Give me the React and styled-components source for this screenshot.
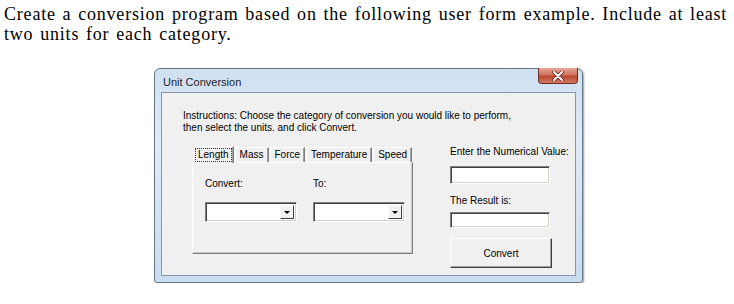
import styled, { createGlobalStyle } from "styled-components";

const GlobalStyle = createGlobalStyle`
  html, body {
    margin: 0;
    background: #ffffff;
  }
  body {
    padding: 4px 4px 0;
    font-family: "Liberation Serif", "Times New Roman", serif;
  }
`;

const Prompt = styled.p`
  margin: 0;
  font-size: 18px;
  line-height: 20px;
  letter-spacing: 0.8px;
  word-spacing: 1.5px;
  color: #000;
  white-space: nowrap;
`;

const Window = styled.div`
  width: 429px;
  height: 215px;
  box-sizing: border-box;
  margin: 24px 0 0 150px;
  border: 1px solid #67778a;
  border-radius: 6px 6px 3px 3px;
  background: linear-gradient(180deg, #cfe0f1 0%, #dfebf7 35%, #c9dcf0 100%);
  box-shadow: 1px 1px 2px rgba(0, 0, 0, 0.4);
  padding: 0 6px 6px 6px;
  font-family: "Liberation Sans", Arial, sans-serif;
`;

const TitleBar = styled.div`
  height: 23px;
  display: flex;
  align-items: flex-start;
  justify-content: space-between;
`;

const Title = styled.span`
  margin: 7px 0 0 2px;
  font-size: 11px;
  color: #1e1e1e;
`;

const CloseButton = styled.div`
  width: 38px;
  height: 15px;
  margin-top: -1px;
  margin-right: -2px;
  border: 1px solid #6b2c23;
  border-top: none;
  border-radius: 0 0 4px 4px;
  background: linear-gradient(180deg, #e6a798 0%, #d27260 45%, #bb452f 55%, #d37c65 100%);
  display: flex;
  align-items: center;
  justify-content: center;
`;

const Client = styled.div`
  border: 1px solid #8497ad;
  background: #f0f0f0;
  height: 184px;
  padding: 17px 0 0 21px;
  box-sizing: border-box;
  font-size: 10px;
  color: #000;
`;

const Instructions = styled.div`
  line-height: 12px;
`;

const Body = styled.div`
  display: grid;
  grid-template-columns: 221px 1fr;
  column-gap: 37px;
  margin-top: 12px;
  padding-left: 9px;
`;

const TabArea = styled.div`
  display: flex;
  flex-direction: column;
`;

const TabStrip = styled.div`
  display: flex;
  align-items: flex-end;
  height: 16px;
  padding-left: 1px;
`;

const Tab = styled.div`
  height: ${(p) => (p.$active ? "16px" : "14px")};
  padding: 0 2px;
  display: flex;
  align-items: center;
  border-left: 1px solid #ffffff;
  border-top: 1px solid #ffffff;
  border-right: 1px solid #808080;
  box-shadow: inset -1px 0 0 #a0a0a0;
  margin-right: 1px;
  position: relative;
  z-index: ${(p) => (p.$active ? 1 : 0)};
  margin-bottom: ${(p) => (p.$active ? "-1px" : "0")};
  background: #f0f0f0;
`;

const TabLabel = styled.span`
  padding: 0 2px;
  outline: ${(p) => (p.$focus ? "1px dotted #333" : "none")};
  line-height: 12px;
`;

const TabPanel = styled.div`
  height: 92px;
  box-sizing: border-box;
  border-left: 1px solid #ffffff;
  border-top: 1px solid #ffffff;
  border-right: 1px solid #808080;
  border-bottom: 1px solid #808080;
  box-shadow: inset -1px -1px 0 #c8c8c8;
  padding: 14px 0 0 12px;
  display: grid;
  grid-template-columns: 92px 92px;
  column-gap: 16px;
  grid-template-rows: 14px 20px;
  row-gap: 11px;
`;

const FieldLabel = styled.div`
  line-height: 14px;
`;

const Combo = styled.div`
  height: 20px;
  box-sizing: border-box;
  border-top: 1px solid #808080;
  border-left: 1px solid #808080;
  border-right: 1px solid #ffffff;
  border-bottom: 1px solid #ffffff;
  box-shadow: inset 1px 1px 0 #404040, inset -1px -1px 0 #d4d0c8;
  background: #ffffff;
  display: flex;
  justify-content: flex-end;
  padding: 2px;
`;

const DropButton = styled.div`
  width: 14px;
  background: #f0f0f0;
  border-top: 1px solid #ffffff;
  border-left: 1px solid #ffffff;
  border-right: 1px solid #404040;
  border-bottom: 1px solid #404040;
  box-sizing: border-box;
  display: flex;
  align-items: center;
  justify-content: center;
  &::after {
    content: "";
    border-left: 3px solid transparent;
    border-right: 3px solid transparent;
    border-top: 3px solid #000;
  }
`;

const SideColumn = styled.div`
  display: flex;
  flex-direction: column;
  white-space: nowrap;
`;

const SideLabel = styled.div`
  line-height: 12px;
  margin-bottom: ${(p) => p.$gap || "6px"};
`;

const TextBox = styled.div`
  width: 100px;
  height: ${(p) => p.$h || "18px"};
  box-sizing: border-box;
  border-top: 1px solid #808080;
  border-left: 1px solid #808080;
  border-right: 1px solid #ffffff;
  border-bottom: 1px solid #ffffff;
  box-shadow: inset 1px 1px 0 #404040, inset -1px -1px 0 #d4d0c8;
  background: #ffffff;
  margin-bottom: ${(p) => p.$mb || "10px"};
`;

const Button = styled.div`
  width: 102px;
  height: 30px;
  box-sizing: border-box;
  border-top: 1px solid #ffffff;
  border-left: 1px solid #ffffff;
  border-right: 1px solid #404040;
  border-bottom: 1px solid #404040;
  box-shadow: inset -1px -1px 0 #a0a0a0;
  background: #f0f0f0;
  display: flex;
  align-items: center;
  justify-content: center;
`;

const tabs = ["Length", "Mass", "Force", "Temperature", "Speed"];

export default function App() {
  return (
    <>
      <GlobalStyle />
      <Prompt>
        Create a conversion program based on the following user form example. Include at least
        <br />
        two units for each category.
      </Prompt>
      <Window>
        <TitleBar>
          <Title>Unit Conversion</Title>
          <CloseButton>
            <svg width="12" height="10" viewBox="0 0 12 10">
              <path
                d="M2 1 L10 9 M10 1 L2 9"
                stroke="#4a1a12"
                strokeWidth="3.4"
                strokeLinecap="round"
              />
              <path
                d="M2 1 L10 9 M10 1 L2 9"
                stroke="#ffffff"
                strokeWidth="2"
                strokeLinecap="round"
              />
            </svg>
          </CloseButton>
        </TitleBar>
        <Client>
          <Instructions>
            Instructions: Choose the category of conversion you would like to perform,
            <br />
            then select the units. and click Convert.
          </Instructions>
          <Body>
            <TabArea>
              <TabStrip>
                {tabs.map((t, i) => (
                  <Tab key={t} $active={i === 0}>
                    <TabLabel $focus={i === 0}>{t}</TabLabel>
                  </Tab>
                ))}
              </TabStrip>
              <TabPanel>
                <FieldLabel>Convert:</FieldLabel>
                <FieldLabel>To:</FieldLabel>
                <Combo>
                  <DropButton />
                </Combo>
                <Combo>
                  <DropButton />
                </Combo>
              </TabPanel>
            </TabArea>
            <SideColumn>
              <SideLabel $gap="8px">Enter the Numerical Value:</SideLabel>
              <TextBox $mb="11px" />
              <SideLabel $gap="5px">The Result is:</SideLabel>
              <TextBox $h="16px" $mb="10px" />
              <Button>Convert</Button>
            </SideColumn>
          </Body>
        </Client>
      </Window>
    </>
  );
}
